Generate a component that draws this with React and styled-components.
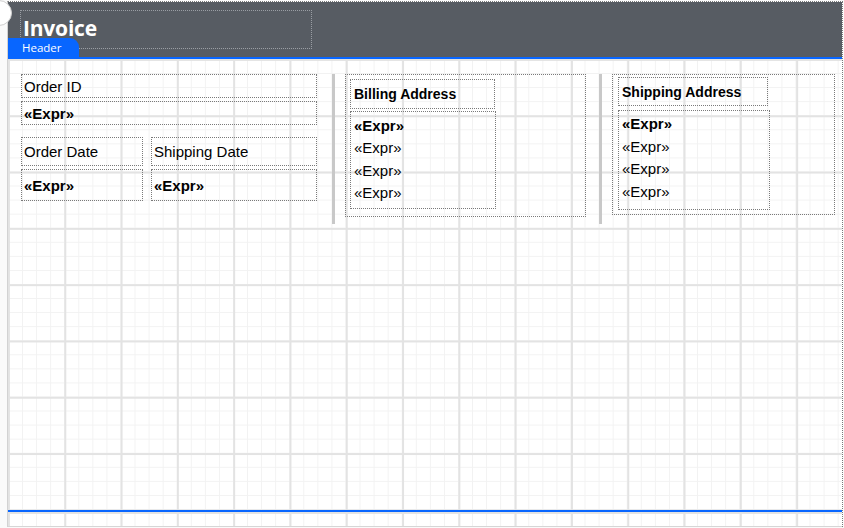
import React from 'react';
import styled, { createGlobalStyle } from 'styled-components';

const blue = '#0866ff';
const dotted = '1px dotted #7a7a7a';
const gridStep = 56.3;

const GlobalStyle = createGlobalStyle`
    html, body {
        margin: 0;
        padding: 0;
        background: #fafafa;
        font-family: "Liberation Sans", Arial, sans-serif;
    }
`;

const Page = styled.div`
    position: relative;
    width: 844px;
    height: 528px;
    overflow: hidden;
`;

const Handle = styled.div`
    position: absolute;
    left: -14px;
    top: 0;
    width: 24px;
    height: 24px;
    border-radius: 50%;
    background: #fff;
    border: 1px solid #cfcfcf;
    z-index: 3;
`;

const Surface = styled.div`
    margin: 1px 1px 0 7px;
    border-left: 1px solid #d2d2d2;
    border-top: ${dotted};
    border-right: ${dotted};
    background: #fff;
`;

const HeaderBand = styled.div`
    position: relative;
    height: 57px;
    background: #575c63;
    border-bottom: 2px solid ${blue};
    padding: 8px 0 0 12px;
    box-sizing: border-box;
`;

const TitleBox = styled.div`
    width: 292px;
    height: 39px;
    border: 1px dotted #9a9ea4;
    box-sizing: border-box;
    padding: 7px 0 0 2px;
    color: #fff;
    font-family: "Open Sans", "Noto Sans", sans-serif;
    font-weight: 700;
    font-size: 21px;
    line-height: 20px;
    letter-spacing: -0.2px;
`;

const BandTab = styled.div`
    position: absolute;
    left: 0;
    bottom: 0;
    width: 71px;
    height: 19px;
    background: ${blue};
    border-top-right-radius: 9px;
    color: #fff;
    font-family: "Open Sans", "Noto Sans", sans-serif;
    font-size: 11.5px;
    line-height: 19px;
    padding-left: 14px;
    box-sizing: border-box;
`;

const gridBg = `
    background-color: #fff;
    background-image:
        linear-gradient(to right, #e3e3e3 1.5px, transparent 1.5px),
        linear-gradient(to bottom, #e3e3e3 1.5px, transparent 1.5px),
        linear-gradient(to right, #f2f2f2 1px, transparent 1px),
        linear-gradient(to bottom, #f2f2f2 1px, transparent 1px);
    background-size:
        ${gridStep}px ${gridStep}px,
        ${gridStep}px ${gridStep}px,
        ${gridStep / 4}px ${gridStep / 4}px,
        ${gridStep / 4}px ${gridStep / 4}px;
`;

const BodyBand = styled.div`
    ${gridBg};
    height: 453px;
    border-bottom: 2px solid ${blue};
    padding: 15px 0 0 13px;
    box-sizing: border-box;
    display: flex;
    align-items: flex-start;
`;

const FooterBand = styled.div`
    ${gridBg};
    height: 14px;
    border-bottom: 1px solid #d6d6d6;
`;

const Column = styled.div`
    width: ${({w}) => w}px;
    flex: none;
    display: flex;
    flex-direction: column;
`;

const Separator = styled.div`
    flex: none;
    width: 3px;
    height: 150px;
    background: #c8c8c8;
    margin: 0 10px 0 ${({ml}) => ml}px;
`;

const Row = styled.div`
    display: flex;
    gap: 8px;
    margin-top: ${({mt}) => mt || 0}px;
`;

const Field = styled.div`
    width: ${({w}) => w ? `${w}px` : '100%'};
    height: ${({h}) => h}px;
    margin-top: ${({mt}) => mt || 0}px;
    border: ${dotted};
    box-sizing: border-box;
    padding: 0 2px;
    display: flex;
    align-items: center;
    font-size: 15px;
    font-weight: ${({bold}) => bold ? 700 : 400};
    color: #000;
    white-space: nowrap;
`;

const Group = styled.div`
    width: ${({w}) => w}px;
    height: ${({h}) => h}px;
    border: ${dotted};
    box-sizing: border-box;
    padding: ${({pt}) => pt}px 0 0 ${({pl}) => pl}px;
    display: flex;
    flex-direction: column;
`;

const Heading = styled.div`
    width: ${({w}) => w}px;
    height: ${({h}) => h}px;
    border: ${dotted};
    box-sizing: border-box;
    padding: 0 3px;
    display: flex;
    align-items: center;
    font-size: 14px;
    font-weight: 700;
    color: #000;
`;

const Lines = styled.div`
    width: ${({w}) => w}px;
    height: ${({h}) => h}px;
    margin-top: ${({mt}) => mt}px;
    border: ${dotted};
    box-sizing: border-box;
    padding: ${({pt}) => pt}px 3px 0;
    font-size: 15px;
    line-height: ${({lh}) => lh}px;
    color: #000;
`;

const Line = styled.div`
    font-weight: ${({bold}) => bold ? 700 : 400};
`;

const AddressBlock = ({ title, box, head, lines }) => (
    <Group w={box.w} h={box.h} pt={box.pt} pl={box.pl}>
        <Heading w={head.w} h={head.h}>{title}</Heading>
        <Lines w={lines.w} h={lines.h} mt={lines.mt} pt={lines.pt} lh={lines.lh}>
            <Line bold>«Expr»</Line>
            <Line>«Expr»</Line>
            <Line>«Expr»</Line>
            <Line>«Expr»</Line>
        </Lines>
    </Group>
);

const App = () => (
    <>
        <GlobalStyle />
        <Page>
            <Handle />
            <Surface>
                <HeaderBand>
                    <TitleBox>Invoice</TitleBox>
                    <BandTab>Header</BandTab>
                </HeaderBand>
                <BodyBand>
                    <Column w={296}>
                        <Field h={24}>Order ID</Field>
                        <Field h={24} mt={3} bold>«Expr»</Field>
                        <Row mt={12}>
                            <Field w={122} h={29}>Order Date</Field>
                            <Field w={166} h={29}>Shipping Date</Field>
                        </Row>
                        <Row mt={3}>
                            <Field w={122} h={32} bold>«Expr»</Field>
                            <Field w={166} h={32} bold>«Expr»</Field>
                        </Row>
                    </Column>
                    <Separator ml={15} />
                    <AddressBlock
                        title="Billing Address"
                        box={{ w: 241, h: 143, pt: 4, pl: 4 }}
                        head={{ w: 145, h: 30 }}
                        lines={{ w: 146, h: 98, mt: 2, pt: 3, lh: 22.3 }}
                    />
                    <Separator ml={13} />
                    <AddressBlock
                        title="Shipping Address"
                        box={{ w: 223, h: 141, pt: 2, pl: 5 }}
                        head={{ w: 150, h: 29 }}
                        lines={{ w: 152, h: 100, mt: 4, pt: 2, lh: 22.5 }}
                    />
                </BodyBand>
                <FooterBand />
            </Surface>
        </Page>
    </>
);

export default App;
